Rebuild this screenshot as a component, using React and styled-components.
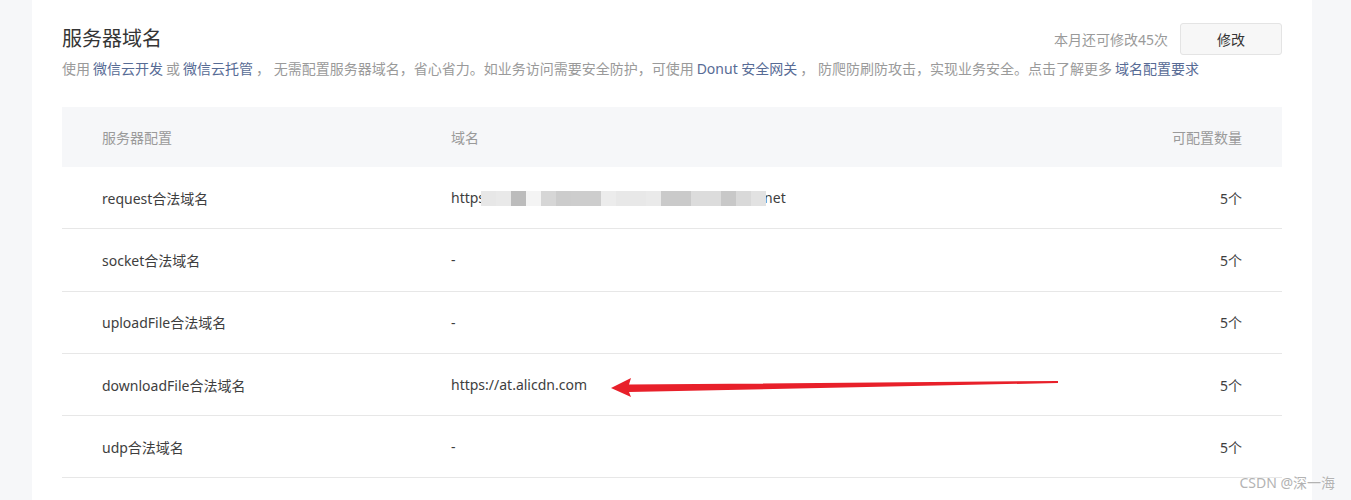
import styled, { createGlobalStyle } from "styled-components";

const GlobalStyle = createGlobalStyle`
  html, body {
    margin: 0;
    padding: 0;
    background: #f6f7f9;
  }
  body {
    font-family: "Noto Sans", "Noto Sans CJK SC", sans-serif;
    color: #353535;
  }
`;

const Page = styled.div`
  position: relative;
  height: 500px;
  overflow: hidden;
  padding: 0 39px 0 32px;
`;

const Panel = styled.div`
  background: #fff;
  height: 500px;
  padding: 0 30px;
  box-sizing: border-box;
`;

const Head = styled.div`
  display: flex;
  justify-content: space-between;
  padding-top: 23px;
`;

const Title = styled.h2`
  margin: 0;
  font-size: 20px;
  font-weight: 400;
  line-height: 32px;
  color: #353535;
`;

const Quota = styled.div`
  display: flex;
  align-items: center;
  gap: 12px;
  font-size: 14px;
  color: #9a9a9a;
`;

const Button = styled.button`
  width: 102px;
  height: 32px;
  border: 1px solid #e4e4e4;
  border-radius: 3px;
  background: #f7f7f7;
  color: #353535;
  font-family: inherit;
  font-size: 14px;
  cursor: pointer;
`;

const Desc = styled.p`
  margin: 2px 0 0;
  font-size: 14px;
  line-height: 24px;
  color: #9a9a9a;
  white-space: nowrap;
`;

const Link = styled.a`
  color: #576b95;
  text-decoration: none;
  margin: 0 3px;
`;

const Table = styled.div`
  margin-top: 26px;
`;

const Row = styled.div`
  display: grid;
  grid-template-columns: 389px 1fr 200px;
  align-items: center;
  height: ${(p) => (p.$head ? "60px" : "62.3px")};
  background: ${(p) => (p.$head ? "#f6f7f9" : "#fff")};
  border-bottom: ${(p) => (p.$head ? "none" : "1px solid #e7e7e7")};
  box-sizing: border-box;
  font-size: 14px;
  color: ${(p) => (p.$head ? "#9a9a9a" : "#3e3e3e")};
`;

const Cell = styled.div`
  padding: ${(p) => (p.$right ? "0 40px 0 0" : p.$first ? "0 0 0 40px" : "0")};
  text-align: ${(p) => (p.$right ? "right" : "left")};
  white-space: nowrap;
`;

const Mosaic = styled.span`
  display: inline-flex;
  vertical-align: middle;
  height: 15px;
  margin: 0 -2px 0 -4px;
  position: relative;
  top: -1px;
`;

const Tile = styled.span`
  width: 15px;
  height: 15px;
`;

const Watermark = styled.div`
  position: absolute;
  right: 16px;
  bottom: 8px;
  font-size: 14px;
  color: #b3b3b3;
  text-shadow: 0 0 2px #fff;
`;

const Arrow = styled.svg`
  position: absolute;
  left: 605px;
  top: 373px;
`;

const tiles = [
  "#e7e7e7", "#e9e9e9", "#bcbcbc", "#f4f4f4", "#d6d6d6", "#cccccc",
  "#cdcdcd", "#cdcdcd", "#ececec", "#e8e8e8", "#e8e8e8", "#eaeaea",
  "#cacaca", "#cacaca", "#dcdcdc", "#dcdcdc", "#c8c8c8", "#d9d9d9", "#e2e2e2",
];

const rows = [
  ["request合法域名", "masked", "5个"],
  ["socket合法域名", "-", "5个"],
  ["uploadFile合法域名", "-", "5个"],
  ["downloadFile合法域名", "https://at.alicdn.com", "5个"],
  ["udp合法域名", "-", "5个"],
];

export default function App() {
  return (
    <>
      <GlobalStyle />
      <Page>
        <Panel>
          <Head>
            <Title>服务器域名</Title>
            <Quota>
              本月还可修改45次
              <Button>修改</Button>
            </Quota>
          </Head>
          <Desc>
            使用<Link>微信云开发</Link>或<Link>微信云托管</Link>， 无需配置服务器域名，省心省力。如业务访问需要安全防护，可使用
            <Link>Donut 安全网关</Link>， 防爬防刷防攻击，实现业务安全。点击了解更多
            <Link>域名配置要求</Link>
          </Desc>
          <Table>
            <Row $head>
              <Cell $first>服务器配置</Cell>
              <Cell>域名</Cell>
              <Cell $right>可配置数量</Cell>
            </Row>
            {rows.map(([name, domain, count]) => (
              <Row key={name}>
                <Cell $first>{name}</Cell>
                <Cell>
                  {domain === "masked" ? (
                    <>
                      https
                      <Mosaic>
                        {tiles.map((c, i) => (
                          <Tile key={i} style={{ background: c }} />
                        ))}
                      </Mosaic>
                      net
                    </>
                  ) : (
                    domain
                  )}
                </Cell>
                <Cell $right>{count}</Cell>
              </Row>
            ))}
          </Table>
        </Panel>
        <Arrow width="460" height="28" viewBox="0 0 460 28">
          <path d="M6 15 L26 5 L24 11.5 L453 8 L453 10 L24 19 L26 24 Z" fill="#e8202a" />
        </Arrow>
        <Watermark>CSDN @深一海</Watermark>
      </Page>
    </>
  );
}
